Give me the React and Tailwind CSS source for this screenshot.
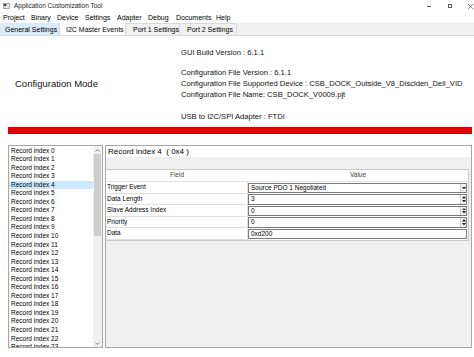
import React from 'react';

const menuItems = [
    ['Project', 'w-[28px]'],
    ['Binary', 'w-[26px]'],
    ['Device', 'w-[28px]'],
    ['Settings', 'w-[32px]'],
    ['Adapter', 'w-[31px]'],
    ['Debug', 'w-[28px]'],
    ['Documents', 'w-[40px]'],
    ['Help', 'w-[20px]'],
];

const records = Array.from({ length: 24 }, (_, i) => `Record index ${i}`);

const rows = [
    { field: 'Trigger Event', value: 'Source PDO 1 Negotiated', kind: 'combo' },
    { field: 'Data Length', value: '3', kind: 'spin' },
    { field: 'Slave Address Index', value: '0', kind: 'spin' },
    { field: 'Priority', value: '0', kind: 'spin' },
    { field: 'Data', value: '0xd200', kind: 'text' },
];

function Chevron({ up }) {
    return (
        <svg width="5" height="3" viewBox="0 0 5 3">
            <polyline
                points={up ? '0.5,2.5 2.5,0.5 4.5,2.5' : '0.5,0.5 2.5,2.5 4.5,0.5'}
                fill="none"
                stroke="#606060"
                strokeWidth="0.8"
            />
        </svg>
    );
}

function Tri({ up }) {
    return (
        <svg width="4" height="2.5" viewBox="0 0 4 2.5">
            <polygon points={up ? '0,2.5 2,0 4,2.5' : '0,0 4,0 2,2.5'} fill="#222" />
        </svg>
    );
}

function ValueCell({ row }) {
    return (
        <div className="flex-1 h-full bg-white py-[0.5px] pr-[1px]">
            <div className="h-full border border-[#7a7a7a] bg-white flex items-center">
                <span className="flex-1 pl-[2px] leading-none">{row.value}</span>
                {row.kind === 'combo' && (
                    <span className="w-[6px] h-full border-l border-[#c8c8c8] bg-[#f0f0f0] flex items-center justify-center">
                        <Tri />
                    </span>
                )}
                {row.kind === 'spin' && (
                    <span className="w-[6px] h-full border-l border-[#c8c8c8] bg-[#f0f0f0] flex flex-col items-center justify-center gap-[1px]">
                        <Tri up />
                        <Tri />
                    </span>
                )}
            </div>
        </div>
    );
}

export default function App() {
    return (
        <div className="w-[474px] h-[357px] overflow-hidden bg-white text-black flex flex-col font-['Liberation_Sans',Arial,sans-serif]">
            {/* title bar */}
            <div className="h-[12px] flex items-center pl-[3px] shrink-0">
                <svg width="7" height="6" viewBox="0 0 7 6">
                    <rect x="0.5" y="0.5" width="6" height="5" fill="#e8e8e8" stroke="#707070" strokeWidth="0.6" />
                    <rect x="1" y="1" width="2.5" height="2" fill="#404040" />
                </svg>
                <span className="ml-[4px] text-[6.5px] leading-none text-[#222]">Application Customization Tool</span>
                <div className="ml-auto flex items-center text-[#444]">
                    <span className="w-[4px] h-[0.6px] bg-[#555] mr-[17px]" />
                    <span className="w-[4px] h-[4px] border-[0.7px] border-[#555] mr-[16px]" />
                    <svg width="5" height="5" viewBox="0 0 5 5" className="mr-[1px]">
                        <path d="M0 0 L5 5 M5 0 L0 5" stroke="#555" strokeWidth="0.7" />
                    </svg>
                </div>
            </div>

            {/* menu bar */}
            <div className="h-[11px] flex items-center pl-[3px] text-[7px] leading-none shrink-0">
                {menuItems.map(([label, w]) => (
                    <span key={label} className={w}>{label}</span>
                ))}
            </div>

            {/* tabs */}
            <div className="h-[13px] flex bg-[#f0f0f0] border-b border-[#dadada] text-[7px] leading-none shrink-0">
                <div className="w-[60px] flex items-center pl-[5px] bg-[#d9ebf9] border-r border-[#c4dcef]">General Settings</div>
                <div className="w-[65px] flex items-center pl-[6px] bg-white">I2C Master Events</div>
                <div className="w-[55px] flex items-center pl-[7px] bg-[#f0f0f0] border-x border-t border-[#d9d9d9]">Port 1 Settings</div>
                <div className="w-[57px] flex items-center pl-[7px] bg-[#f0f0f0] border-r border-t border-[#d9d9d9]">Port 2 Settings</div>
            </div>

            {/* header info */}
            <div className="h-[91px] flex shrink-0">
                <div className="w-[181px] flex items-center pl-[15px] pt-[5px] text-[9.5px] text-[#111]">
                    Configuration Mode
                </div>
                <div className="flex flex-col pt-[10.5px] text-[7.6px] leading-[11px] text-[#111]">
                    <span>GUI Build Version : 6.1.1</span>
                    <div className="flex flex-col mt-[9px]">
                        <span>Configuration File Version : 6.1.1</span>
                        <span>Configuration File Supported Device : CSB_DOCK_Outside_V8_Disclden_Dell_VID</span>
                        <span>Configuration File Name: CSB_DOCK_V0009.pjt</span>
                    </div>
                    <span className="mt-[11px]">USB to I2C/SPI Adapter : FTDI</span>
                </div>
            </div>

            {/* red bar */}
            <div className="ml-[8px] w-[464px] h-[7px] bg-[#e00000] shrink-0" />

            {/* lower area */}
            <div className="mt-[11px] pl-[8px] flex gap-[2px] h-[203px] shrink-0">
                {/* record list */}
                <div className="w-[95px] h-full border border-[#a5a5a5] bg-white flex">
                    <div className="flex-1 overflow-hidden pt-[0.5px] text-[6.5px] leading-[8.55px]">
                        {records.map((r, i) => (
                            <div key={r} className={`pl-[2px] h-[8.55px] ${i === 4 ? 'bg-[#cce8ff]' : ''}`}>{r}</div>
                        ))}
                    </div>
                    <div className="w-[9px] h-full bg-[#f0f0f0] flex flex-col">
                        <div className="h-[8px] flex items-center justify-center"><Chevron up /></div>
                        <div className="h-[82px] mx-[1px] bg-[#cdcdcd]" />
                        <div className="flex-1" />
                        <div className="h-[8px] flex items-center justify-center"><Chevron /></div>
                    </div>
                </div>

                {/* record detail */}
                <div className="w-[367px] h-full border border-[#a5a5a5] bg-[#f0f0f0] flex flex-col">
                    <div className="h-[11px] bg-white flex items-center pl-[2px] text-[8px] leading-none">
                        Record index 4&nbsp;&nbsp;( 0x4 )
                    </div>
                    <div className="h-[12px]" />
                    <div className="mr-[2px] border-y border-r border-[#c8c8c8] bg-white text-[6.5px] leading-none flex flex-col">
                        <div className="h-[12px] flex items-center text-[#444] border-b border-[#e0e0e0]">
                            <span className="w-[142px] text-center">Field</span>
                            <span className="flex-1 text-center">Value</span>
                        </div>
                        {rows.map((row) => (
                            <div key={row.field} className="h-[11.5px] flex items-center">
                                <span className="w-[142px] h-full flex items-center pl-[1px] border-r border-b border-[#e0e0e0]">{row.field}</span>
                                <ValueCell row={row} />
                            </div>
                        ))}
                    </div>
                </div>
            </div>
        </div>
    );
}
